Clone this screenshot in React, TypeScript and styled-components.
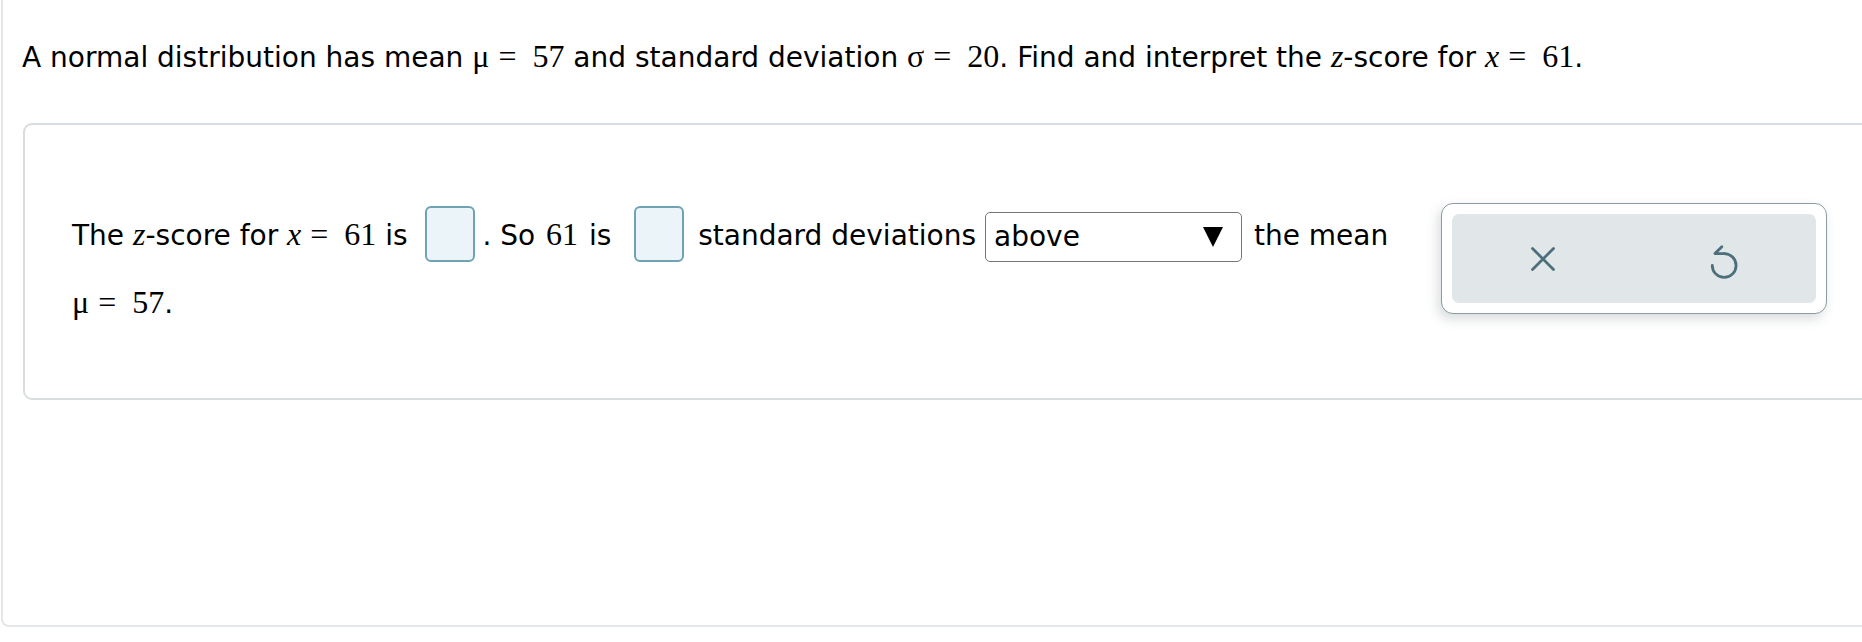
import React from "react";
import styled, { createGlobalStyle } from "styled-components";

const Global = createGlobalStyle`
  html, body { margin: 0; padding: 0; background: #ffffff; overflow: hidden; }
  body { font-family: "DejaVu Sans", Verdana, sans-serif; color: #000; }
`;

const Frame = styled.div`
  box-sizing: border-box;
  margin-left: 1px;
  width: 1920px;
  height: 627px;
  border-left: 2px solid #e3e7e9;
  border-bottom: 2px solid #e3e7e9;
  border-bottom-left-radius: 8px;
  padding: 36px 0 0 19px;
`;

const Question = styled.p`
  margin: 0;
  font-size: 28px;
  line-height: 40px;
  white-space: nowrap;
`;

const M = styled.span<{ $italic?: boolean; $pad?: number }>`
  font-family: "Liberation Serif", "Times New Roman", serif;
  font-size: 32px;
  font-style: ${(p) => (p.$italic ? "italic" : "normal")};
  padding: 0 ${(p) => p.$pad ?? 0}px;
`;

const Eq = styled.span`
  font-family: "Liberation Serif", "Times New Roman", serif;
  font-size: 32px;
  margin: 0 16px 0 9px;
`;

const Card = styled.div`
  box-sizing: border-box;
  margin-top: 45px;
  margin-left: 1px;
  width: 1900px;
  height: 277px;
  border: 2px solid #d8dde0;
  border-radius: 9px;
  padding: 76px 0 0 47px;
  display: flex;
  align-items: flex-start;
  gap: 28px;
`;

const Body = styled.div`
  flex: 0 0 1341px;
  font-size: 28px;
  line-height: 67px;
`;

const AnswerBox = styled.span<{ $before: number; $after: number }>`
  display: inline-block;
  box-sizing: border-box;
  width: 50px;
  height: 56px;
  margin: 0 ${(p) => p.$after}px 0 ${(p) => p.$before}px;
  vertical-align: middle;
  position: relative;
  top: -3px;
  border: 2.5px solid #6fa2b2;
  border-radius: 6px;
  background: #eaf4f9;
`;

const Select = styled.span`
  display: inline-flex;
  align-items: center;
  justify-content: space-between;
  box-sizing: border-box;
  width: 257px;
  height: 50px;
  margin: 0 3px 0 9px;
  padding: 0 18px 0 8px;
  vertical-align: middle;
  border: 1.5px solid #767676;
  border-radius: 5px;
  background: #fff;
  line-height: 1;
`;

const Caret = styled.span`
  width: 0;
  height: 0;
  border-left: 10px solid transparent;
  border-right: 10px solid transparent;
  border-top: 20px solid #000;
`;

const Panel = styled.div`
  flex: 0 0 auto;
  box-sizing: border-box;
  width: 386px;
  height: 111px;
  margin-top: 2px;
  padding: 10px;
  border: 1.5px solid #8a9ba3;
  border-radius: 12px;
  background: #fff;
  box-shadow: -3px 5px 12px rgba(60, 80, 90, 0.2);
  display: flex;
`;

const Tools = styled.div`
  flex: 1;
  display: flex;
  background: #e1e6e9;
  border-radius: 7px;
`;

const ToolButton = styled.div`
  flex: 1;
  display: flex;
  align-items: center;
  justify-content: center;
  color: #4d6f7c;
`;

const CloseIcon = () => (
  <svg width="24" height="24" viewBox="0 0 24 24" fill="none">
    <path d="M1.5 1.5 L22.5 22.5 M22.5 1.5 L1.5 22.5" stroke="#4d6f7c" strokeWidth="2.8" strokeLinecap="round" />
  </svg>
);

const UndoIcon = () => (
  <svg width="32" height="38" viewBox="55 30 95 115" fill="none" style={{ marginTop: 6 }}>
    <path d="M100 62 A36 36 0 1 1 64 98" stroke="#4d6f7c" strokeWidth="8.5" strokeLinecap="round" />
    <path d="M93 41 L72 62 L100 62" stroke="#4d6f7c" strokeWidth="8.5" strokeLinecap="round" strokeLinejoin="round" />
  </svg>
);

export default function App() {
  return (
    <>
      <Global />
      <Frame>
        <Question>
          A normal distribution has mean <M>μ</M>
          <Eq>=</Eq>
          <M>57</M> and standard deviation <M>σ</M>
          <Eq>=</Eq>
          <M>20</M>. Find and interpret the <M $italic>z</M>-score for <M $italic>x</M>
          <Eq>=</Eq>
          <M>61</M>.
        </Question>
        <Card>
          <Body>
            The <M $italic>z</M>-score for <M $italic>x</M>
            <Eq>=</Eq>
            <M>61</M> is <AnswerBox $before={8} $after={8} />. So <M $pad={2}>61</M> is{" "}
            <AnswerBox $before={14} $after={5} /> standard deviations
            <Select>
              <span>above</span>
              <Caret />
            </Select>{" "}
            the mean <M>μ</M>
            <Eq>=</Eq>
            <M>57</M>.
          </Body>
          <Panel>
            <Tools>
              <ToolButton>
                <CloseIcon />
              </ToolButton>
              <ToolButton>
                <UndoIcon />
              </ToolButton>
            </Tools>
          </Panel>
        </Card>
      </Frame>
    </>
  );
}
